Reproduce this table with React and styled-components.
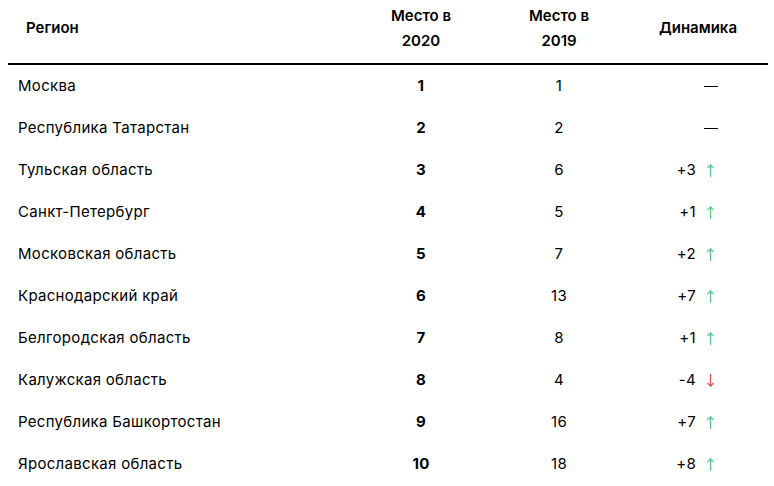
import React from "react";
import styled, { createGlobalStyle } from "styled-components";

const Global = createGlobalStyle`
  body {
    margin: 0;
    background: #fff;
    font-family: Inter, "Noto Sans", sans-serif;
    color: #000;
  }
`;

const Wrap = styled.div`
  padding: 0 6px 0 8px;
`;

const cols = "344px 138px 138px 140px";

const HeadRow = styled.div`
  display: grid;
  grid-template-columns: ${cols};
  align-items: center;
  box-sizing: border-box;
  height: 65px;
  padding-bottom: 8px;
  border-bottom: 2px solid #000;
  font-size: 15px;
  font-weight: 600;
  line-height: 25px;
`;

const HeadCell = styled.div`
  text-align: ${(p) => p.$align || "center"};
  padding-left: ${(p) => p.$pl || 0}px;
`;

const Row = styled.div`
  display: grid;
  grid-template-columns: ${cols};
  align-items: center;
  height: 42px;
  font-size: 15px;
  line-height: 20px;
  letter-spacing: 0.3px;
`;

const RegionCell = styled.div`
  padding-left: 10px;
`;

const NumCell = styled.div`
  text-align: center;
  font-weight: ${(p) => (p.$bold ? 700 : 400)};
`;

const DynCell = styled.div`
  display: flex;
  justify-content: flex-end;
  align-items: center;
  padding-right: 50px;
`;

const Delta = styled.span`
  margin-right: 11px;
`;

const Dash = styled.span`
  display: block;
  width: 14px;
  height: 1px;
  background: #000;
`;

const ArrowBox = styled.span`
  display: block;
  margin-right: 4px;
  line-height: 0;
`;

const Arrow = ({ up }) => (
  <ArrowBox>
    <svg width="7" height="13" viewBox="0 0 7 13">
      {up ? (
        <g stroke="#52c98a" strokeWidth="1.2" fill="none" strokeLinecap="round" strokeLinejoin="round">
          <path d="M3.5 12.5V1" />
          <path d="M0.8 3.7L3.5 1L6.2 3.7" />
        </g>
      ) : (
        <g stroke="#e5484d" strokeWidth="1.2" fill="none" strokeLinecap="round" strokeLinejoin="round">
          <path d="M3.5 0.5V12" />
          <path d="M0.8 9.3L3.5 12L6.2 9.3" />
        </g>
      )}
    </svg>
  </ArrowBox>
);

const data = [
  ["Москва", 1, 1, 0],
  ["Республика Татарстан", 2, 2, 0],
  ["Тульская область", 3, 6, 3],
  ["Санкт-Петербург", 4, 5, 1],
  ["Московская область", 5, 7, 2],
  ["Краснодарский край", 6, 13, 7],
  ["Белгородская область", 7, 8, 1],
  ["Калужская область", 8, 4, -4],
  ["Республика Башкортостан", 9, 16, 7],
  ["Ярославская область", 10, 18, 8],
];

export default function App() {
  return (
    <Wrap>
      <Global />
      <HeadRow>
        <HeadCell $align="left" $pl={18}>Регион</HeadCell>
        <HeadCell>Место в<br />2020</HeadCell>
        <HeadCell>Место в<br />2019</HeadCell>
        <HeadCell>Динамика</HeadCell>
      </HeadRow>
      {data.map(([name, a, b, d]) => (
        <Row key={name}>
          <RegionCell>{name}</RegionCell>
          <NumCell $bold>{a}</NumCell>
          <NumCell>{b}</NumCell>
          <DynCell>
            {d === 0 ? (
              <Dash />
            ) : (
              <>
                <Delta>{d > 0 ? `+${d}` : `${d}`}</Delta>
                <Arrow up={d > 0} />
              </>
            )}
          </DynCell>
        </Row>
      ))}
    </Wrap>
  );
}
